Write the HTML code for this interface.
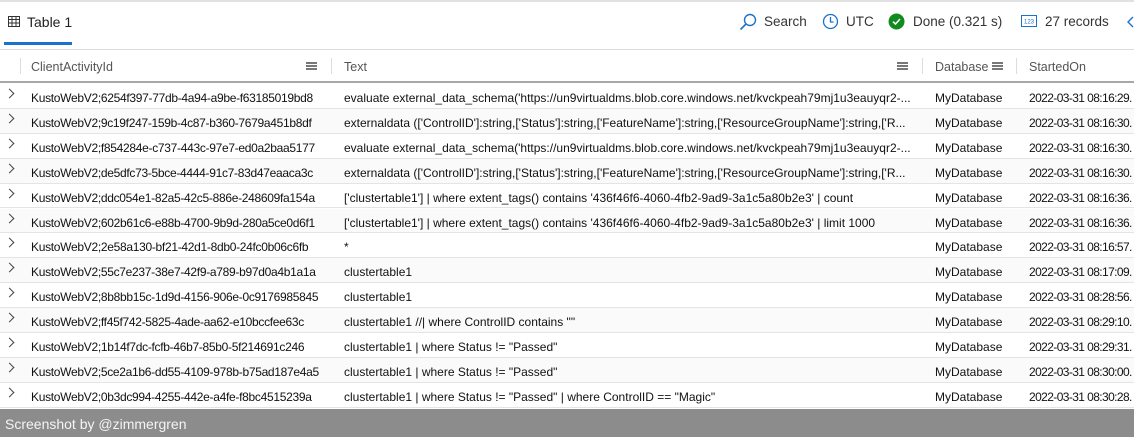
<!DOCTYPE html>
<html><head><meta charset="utf-8"><style>
*{margin:0;padding:0;box-sizing:border-box}
body{width:1134px;height:437px;overflow:hidden;background:#fff;font-family:"Liberation Sans",sans-serif;color:#111;position:relative}
.top{position:absolute;left:0;top:0;width:1134px;height:2px;background:#e1e1e1}
.tab{position:absolute;left:9px;top:14px;font-size:14px;color:#222}
.ul{position:absolute;left:4px;top:42px;width:68px;height:3px;background:#1a73c8}
.tb{position:absolute;top:14px;font-size:13.5px;color:#333;white-space:nowrap}
.hdr{position:absolute;left:0;top:49px;width:1134px;height:34px;border-top:1px solid #dcdcdc;border-bottom:2px solid #a8a8a8;font-size:12.5px;color:#555}
.hdr span{position:absolute;top:10px}
.sep{position:absolute;top:8px;width:1px;height:16px;background:#ddd}
.menu{position:absolute;top:12px;width:11px;height:8px;border-top:2px solid #777;border-bottom:2px solid #777}
.menu:after{content:"";position:absolute;left:0;top:1px;width:11px;height:2px;background:#777}
.row{position:absolute;left:0;width:1134px;height:24.9px;border-bottom:1px solid #e4e4e4;font-size:12px;white-space:nowrap}
.row.alt{background:#fafafa}
.row span{position:absolute;top:7px}
.row span.id{letter-spacing:-0.3px}
.row span.d{letter-spacing:-0.6px}
.chev{position:absolute;left:6px;top:6px;width:7px;height:7px;border-right:1px solid #444;border-top:1px solid #444;transform:rotate(45deg)}
.foot{position:absolute;left:0;top:409px;width:1134px;height:28px;background:#8c8c8c;color:#f4f4f4;font-size:14px;padding:7px 0 0 5px}
</style></head><body>
<div class="top"></div>
<svg style="position:absolute;left:8px;top:16px" width="12" height="11" viewBox="0 0 12 11"><rect x="0.5" y="0.5" width="11" height="10" fill="none" stroke="#333"/><path d="M0 3.5H12M0 7H12M4 0V11M8 0V11" stroke="#333"/></svg>
<div class="tab" style="left:27px">Table 1</div>
<div class="ul"></div>
<svg style="position:absolute;left:739px;top:13px" width="18" height="18" viewBox="0 0 18 18"><circle cx="11" cy="7" r="5.5" fill="none" stroke="#1a73c8" stroke-width="1.4"/><path d="M7 11L1.5 16.5" stroke="#1a73c8" stroke-width="1.6"/></svg>
<div class="tb" style="left:764px">Search</div>
<svg style="position:absolute;left:822px;top:13px" width="17" height="17" viewBox="0 0 17 17"><circle cx="8.5" cy="8.5" r="7" fill="none" stroke="#1a73c8" stroke-width="1.3"/><path d="M8.5 4V9H11.5" fill="none" stroke="#1a73c8" stroke-width="1.3"/></svg>
<div class="tb" style="left:846px">UTC</div>
<svg style="position:absolute;left:888px;top:13px" width="17" height="17" viewBox="0 0 17 17"><circle cx="8.5" cy="8.5" r="8" fill="#118a1e"/><path d="M5 8.7L7.5 11L12 6" fill="none" stroke="#fff" stroke-width="1.6"/></svg>
<div class="tb" style="left:913px">Done (0.321 s)</div>
<svg style="position:absolute;left:1021px;top:15px" width="16" height="12" viewBox="0 0 16 12"><rect x="0.5" y="0.5" width="15" height="11" fill="none" stroke="#1a73c8"/><text x="8" y="8.5" font-size="6" text-anchor="middle" fill="#1a73c8" font-family="Liberation Sans">123</text></svg>
<div class="tb" style="left:1045px">27 records</div>
<svg style="position:absolute;left:1126px;top:16px" width="8" height="12"><path d="M7 1L2 6L7 11" fill="none" stroke="#1a73c8" stroke-width="1.4"/></svg>
<div class="hdr">
<div class="sep" style="left:20px"></div><span style="left:31px">ClientActivityId</span><div class="menu" style="left:306px"></div>
<div class="sep" style="left:331px"></div><span style="left:344px">Text</span><div class="menu" style="left:897px"></div>
<div class="sep" style="left:922px"></div><span style="left:935px">Database</span><div class="menu" style="left:992px"></div>
<div class="sep" style="left:1016px"></div><span style="left:1029px">StartedOn</span>
</div>
<div class="row" style="top:84px"><div class="chev"></div><span class="id" style="left:31px">KustoWebV2;6254f397-77db-4a94-a9be-f63185019bd8</span><span style="left:344px">evaluate external_data_schema('https://un9virtualdms.blob.core.windows.net/kvckpeah79mj1u3eauyqr2-...</span><span style="left:935px">MyDatabase</span><span class="d" style="left:1029px">2022-03-31 08:16:29.</span></div>
<div class="row alt" style="top:108.9px"><div class="chev"></div><span class="id" style="left:31px">KustoWebV2;9c19f247-159b-4c87-b360-7679a451b8df</span><span style="left:344px">externaldata (['ControlID']:string,['Status']:string,['FeatureName']:string,['ResourceGroupName']:string,['R...</span><span style="left:935px">MyDatabase</span><span class="d" style="left:1029px">2022-03-31 08:16:30.</span></div>
<div class="row" style="top:133.8px"><div class="chev"></div><span class="id" style="left:31px">KustoWebV2;f854284e-c737-443c-97e7-ed0a2baa5177</span><span style="left:344px">evaluate external_data_schema('https://un9virtualdms.blob.core.windows.net/kvckpeah79mj1u3eauyqr2-...</span><span style="left:935px">MyDatabase</span><span class="d" style="left:1029px">2022-03-31 08:16:30.</span></div>
<div class="row alt" style="top:158.7px"><div class="chev"></div><span class="id" style="left:31px">KustoWebV2;de5dfc73-5bce-4444-91c7-83d47eaaca3c</span><span style="left:344px">externaldata (['ControlID']:string,['Status']:string,['FeatureName']:string,['ResourceGroupName']:string,['R...</span><span style="left:935px">MyDatabase</span><span class="d" style="left:1029px">2022-03-31 08:16:30.</span></div>
<div class="row" style="top:183.6px"><div class="chev"></div><span class="id" style="left:31px">KustoWebV2;ddc054e1-82a5-42c5-886e-248609fa154a</span><span style="left:344px">['clustertable1'] | where extent_tags() contains '436f46f6-4060-4fb2-9ad9-3a1c5a80b2e3' | count</span><span style="left:935px">MyDatabase</span><span class="d" style="left:1029px">2022-03-31 08:16:36.</span></div>
<div class="row alt" style="top:208.5px"><div class="chev"></div><span class="id" style="left:31px">KustoWebV2;602b61c6-e88b-4700-9b9d-280a5ce0d6f1</span><span style="left:344px">['clustertable1'] | where extent_tags() contains '436f46f6-4060-4fb2-9ad9-3a1c5a80b2e3' | limit 1000</span><span style="left:935px">MyDatabase</span><span class="d" style="left:1029px">2022-03-31 08:16:36.</span></div>
<div class="row" style="top:233.4px"><div class="chev"></div><span class="id" style="left:31px">KustoWebV2;2e58a130-bf21-42d1-8db0-24fc0b06c6fb</span><span style="left:344px">*</span><span style="left:935px">MyDatabase</span><span class="d" style="left:1029px">2022-03-31 08:16:57.</span></div>
<div class="row alt" style="top:258.3px"><div class="chev"></div><span class="id" style="left:31px">KustoWebV2;55c7e237-38e7-42f9-a789-b97d0a4b1a1a</span><span style="left:344px">clustertable1</span><span style="left:935px">MyDatabase</span><span class="d" style="left:1029px">2022-03-31 08:17:09.</span></div>
<div class="row" style="top:283.2px"><div class="chev"></div><span class="id" style="left:31px">KustoWebV2;8b8bb15c-1d9d-4156-906e-0c9176985845</span><span style="left:344px">clustertable1</span><span style="left:935px">MyDatabase</span><span class="d" style="left:1029px">2022-03-31 08:28:56.</span></div>
<div class="row alt" style="top:308.1px"><div class="chev"></div><span class="id" style="left:31px">KustoWebV2;ff45f742-5825-4ade-aa62-e10bccfee63c</span><span style="left:344px">clustertable1 //| where ControlID contains ""</span><span style="left:935px">MyDatabase</span><span class="d" style="left:1029px">2022-03-31 08:29:10.</span></div>
<div class="row" style="top:333px"><div class="chev"></div><span class="id" style="left:31px">KustoWebV2;1b14f7dc-fcfb-46b7-85b0-5f214691c246</span><span style="left:344px">clustertable1 | where Status != "Passed"</span><span style="left:935px">MyDatabase</span><span class="d" style="left:1029px">2022-03-31 08:29:31.</span></div>
<div class="row alt" style="top:357.9px"><div class="chev"></div><span class="id" style="left:31px">KustoWebV2;5ce2a1b6-dd55-4109-978b-b75ad187e4a5</span><span style="left:344px">clustertable1 | where Status != "Passed"</span><span style="left:935px">MyDatabase</span><span class="d" style="left:1029px">2022-03-31 08:30:00.</span></div>
<div class="row" style="top:382.8px"><div class="chev"></div><span class="id" style="left:31px">KustoWebV2;0b3dc994-4255-442e-a4fe-f8bc4515239a</span><span style="left:344px">clustertable1 | where Status != "Passed" | where ControlID == "Magic"</span><span style="left:935px">MyDatabase</span><span class="d" style="left:1029px">2022-03-31 08:30:28.</span></div>
<div class="foot">Screenshot by @zimmergren</div>
</body></html>
